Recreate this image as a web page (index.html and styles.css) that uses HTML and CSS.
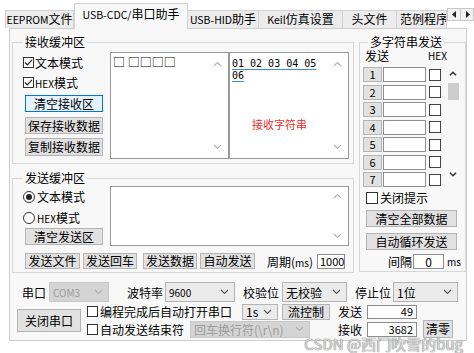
FILE: index.html
```html
<!doctype html>
<html lang="zh-cn">
  <head>
    <meta charset="utf-8">
    <title>USB-CDC/串口助手</title>
    <link rel="stylesheet" href="styles.css">
  </head>
  <body>
    <div class="tabs">
      <div class="tab t1"><span class="asc">EEPROM</span>文件</div>
      <div class="tab t2 active"><span class="asc">USB-CDC/</span>串口助手</div>
      <div class="tab t3"><span class="asc">USB-HID</span>助手</div>
      <div class="tab t4"><span class="asc">Keil</span>仿真设置</div>
      <div class="tab t5">头文件</div>
      <div class="tab t6">范例程序</div>
      <div class="tab-arrows">
        <span class="arrow"><svg width="5" height="7" viewBox="0 0 5 7"><path d="M4 0v7L0 3.5z" fill="#222"/></svg></span>
        <span class="arrow"><svg width="5" height="7" viewBox="0 0 5 7"><path d="M1 0v7l4-3.5z" fill="#222"/></svg></span>
      </div>
    </div>

    <div class="panel">
      <div class="main">
        <div class="left">
          <div class="group recv">
            <div class="group-title">接收缓冲区</div>
            <div class="recv-body">
              <div class="side">
                <div class="check-row"><span class="cb checked"><svg width="9" height="9" viewBox="0 0 9 9"><path d="M1 4.5l2.3 2.3L8 1.8" fill="none" stroke="#222" stroke-width="1.2"/></svg></span><span>文本模式</span></div>
                <div class="check-row"><span class="cb checked"><svg width="9" height="9" viewBox="0 0 9 9"><path d="M1 4.5l2.3 2.3L8 1.8" fill="none" stroke="#222" stroke-width="1.2"/></svg></span><span><span class="small">HEX</span>模式</span></div>
                <div class="btn side-btn b1 focus">清空接收区</div>
                <div class="btn side-btn b2">保存接收数据</div>
                <div class="btn side-btn b3">复制接收数据</div>
              </div>
              <div class="textbox recv-a">
                <div class="tb-text boxes">□ □□□□</div>
                <div class="tb-scroll">
                  <svg width="9" height="6" viewBox="0 0 9 6"><path d="M1 5l3.5-3.5L8 5" fill="none" stroke="#b4b4b4" stroke-width="1.1"/></svg>
                  <svg width="9" height="6" viewBox="0 0 9 6"><path d="M1 1l3.5 3.5L8 1" fill="none" stroke="#b4b4b4" stroke-width="1.1"/></svg>
                </div>
              </div>
              <div class="textbox recv-b">
                <div class="tb-text">
                  <div class="hex"><span class="ul">01 02 03 04 05</span></div>
                  <div class="hex"><span class="ul">06</span></div>
                  <div class="note">接收字符串</div>
                </div>
                <div class="tb-scroll">
                  <svg width="9" height="6" viewBox="0 0 9 6"><path d="M1 5l3.5-3.5L8 5" fill="none" stroke="#b4b4b4" stroke-width="1.1"/></svg>
                  <svg width="9" height="6" viewBox="0 0 9 6"><path d="M1 1l3.5 3.5L8 1" fill="none" stroke="#b4b4b4" stroke-width="1.1"/></svg>
                </div>
              </div>
            </div>
          </div>

          <div class="group send">
            <div class="group-title">发送缓冲区</div>
            <div class="send-body">
              <div class="side">
                <div class="radio-row"><span class="rb"><span class="dot"></span></span><span>文本模式</span></div>
                <div class="radio-row"><span class="rb"></span><span><span class="small">HEX</span>模式</span></div>
                <div class="btn side-btn">清空发送区</div>
              </div>
              <div class="textbox send-box">
                <div class="tb-text"></div>
                <div class="tb-scroll">
                  <svg width="9" height="6" viewBox="0 0 9 6"><path d="M1 5l3.5-3.5L8 5" fill="none" stroke="#b4b4b4" stroke-width="1.1"/></svg>
                  <svg width="9" height="6" viewBox="0 0 9 6"><path d="M1 1l3.5 3.5L8 1" fill="none" stroke="#b4b4b4" stroke-width="1.1"/></svg>
                </div>
              </div>
            </div>
            <div class="send-actions">
              <div class="btn a1">发送文件</div>
              <div class="btn a2">发送回车</div>
              <div class="btn a3">发送数据</div>
              <div class="btn a4">自动发送</div>
              <span class="period">周期(<span class="small">ms</span>)</span>
              <div class="field period-field">1000</div>
            </div>
          </div>
        </div>

        <div class="group multi">
          <div class="group-title">多字符串发送</div>
          <div class="multi-head"><span>发送</span><span class="hex-label">HEX</span></div>
          <div class="multi-list">
            <div class="rows">
              <div class="row"><div class="btn num">1</div><div class="field str"></div><span class="cb"></span></div>
              <div class="row"><div class="btn num">2</div><div class="field str"></div><span class="cb"></span></div>
              <div class="row"><div class="btn num">3</div><div class="field str"></div><span class="cb"></span></div>
              <div class="row"><div class="btn num">4</div><div class="field str"></div><span class="cb"></span></div>
              <div class="row"><div class="btn num">5</div><div class="field str"></div><span class="cb"></span></div>
              <div class="row"><div class="btn num">6</div><div class="field str"></div><span class="cb"></span></div>
              <div class="row"><div class="btn num">7</div><div class="field str"></div><span class="cb"></span></div>
            </div>
            <div class="vscroll">
              <div class="vs-arrow"><svg width="8" height="5" viewBox="0 0 8 5"><path d="M1 4.2l3-3 3 3" fill="none" stroke="#333" stroke-width="1.5"/></svg></div>
              <div class="vs-thumb"></div>
              <div class="vs-space"></div>
              <div class="vs-arrow"><svg width="8" height="5" viewBox="0 0 8 5"><path d="M1 0.8l3 3 3-3" fill="none" stroke="#333" stroke-width="1.5"/></svg></div>
            </div>
          </div>
          <div class="tip-row"><span class="cb"></span><span>关闭提示</span></div>
          <div class="btn wide w1">清空全部数据</div>
          <div class="btn wide w2">自动循环发送</div>
          <div class="gap-row"><span>间隔</span><div class="field gap-field">0</div><span class="small ms">ms</span></div>
        </div>
      </div>

      <div class="serial-row">
        <span class="lbl l1">串口</span>
        <div class="sel disabled s1"><span class="small">COM3</span><svg width="9" height="6" viewBox="0 0 9 6"><path d="M1 1l3.5 3.5L8 1" fill="none" stroke="#b0b0b0" stroke-width="1.1"/></svg></div>
        <span class="lbl l2">波特率</span>
        <div class="sel s2"><span class="small">9600</span><svg width="9" height="6" viewBox="0 0 9 6"><path d="M1 1l3.5 3.5L8 1" fill="none" stroke="#555" stroke-width="1.1"/></svg></div>
        <span class="lbl l3">校验位</span>
        <div class="sel s3"><span>无校验</span><svg width="9" height="6" viewBox="0 0 9 6"><path d="M1 1l3.5 3.5L8 1" fill="none" stroke="#555" stroke-width="1.1"/></svg></div>
        <span class="lbl l4">停止位</span>
        <div class="sel s4"><span>1位</span><svg width="9" height="6" viewBox="0 0 9 6"><path d="M1 1l3.5 3.5L8 1" fill="none" stroke="#555" stroke-width="1.1"/></svg></div>
      </div>

      <div class="serial-bottom">
        <div class="btn close-btn">关闭串口</div>
        <div class="serial-opts">
          <div class="opt-row r1">
            <span class="cb"></span>
            <span class="opt-label o1">编程完成后自动打开串口</span>
            <div class="sel s5"><span>1s</span><svg width="9" height="6" viewBox="0 0 9 6"><path d="M1 1l3.5 3.5L8 1" fill="none" stroke="#555" stroke-width="1.1"/></svg></div>
            <div class="btn flow">流控制</div>
            <span class="count-lbl">发送</span>
            <div class="field count">49</div>
          </div>
          <div class="opt-row r2">
            <span class="cb"></span>
            <span class="opt-label o2">自动发送结束符</span>
            <div class="sel disabled s6"><span>回车换行符(\r\n)</span><svg width="9" height="6" viewBox="0 0 9 6"><path d="M1 1l3.5 3.5L8 1" fill="none" stroke="#b0b0b0" stroke-width="1.1"/></svg></div>
            <span class="count-lbl c2">接收</span>
            <div class="field count">3682</div>
            <div class="btn clear">清零</div>
          </div>
        </div>
      </div>
    </div>

    <div class="watermark">CSDN @西门吹雪的bug</div>
  </body>
</html>
```

FILE: styles.css
```css
* { box-sizing: border-box; }
body { margin: 0; width: 474px; height: 353px; background: #fff; color: #000; font-family: "Noto Sans CJK SC", sans-serif; font-size: 12px; position: relative; overflow: hidden; }
.small { font-size: 10px; }

/* tab strip */
.tabs { display: flex; align-items: flex-end; height: 28px; padding-left: 5px; }
.tab { height: 18px; line-height: 16px; text-align: center; white-space: nowrap; background: #ececec; border: 1px solid #d2d2d2; border-bottom: none; }
.tab .asc { font-size: 10.5px; }
.tab + .tab { border-left: none; }
.tab.active { height: 26px; line-height: 20px; margin-bottom: -1px; background: #f8f8f8; position: relative; z-index: 1; border-left: 1px solid #d2d2d2; }
.t1 { width: 69px; }
.t2 { width: 114px; }
.t3 { width: 71px; }
.t4 { width: 84px; }
.t5 { width: 54px; }
.t6 { width: 50px; overflow: hidden; text-align: left; padding-left: 3px; }
.tab-arrows { display: flex; align-self: flex-start; margin-top: 8px; }
.arrow { width: 14px; height: 13px; display: flex; align-items: center; justify-content: center; background: #f2f2f2; border: 1px solid #c8c8c8; }
.arrow + .arrow { border-left: none; width: 13px; }

/* page */
.panel { margin-left: 9px; width: 458px; height: 313px; border: 1px solid #cfcfcf; background: #f8f8f8; padding: 13px 0 0 2px; }
.main { display: flex; gap: 5px; }
.left { width: 342px; display: flex; flex-direction: column; gap: 14px; }
.group { border: 1px solid #d8d8d8; }
.group-title { width: max-content; margin: -8px 0 0 10px; padding: 0 2px; line-height: 14px; height: 14px; background: #f8f8f8; }
.recv { height: 122px; }
.send { height: 95px; }
.multi { width: 107px; height: 230px; }
.multi .group-title { margin-left: 8px; }

/* controls */
.btn { display: flex; align-items: center; justify-content: center; white-space: nowrap; background: #e1e1e1; border: 1px solid #b4b4b4; line-height: 1; }
.btn.focus { background: #e5f1fb; border-color: #0078d7; }
.cb { width: 11px; height: 11px; flex: none; display: flex; align-items: center; justify-content: center; background: #fff; border: 1px solid #333; }
.rb { width: 12px; height: 12px; flex: none; display: flex; align-items: center; justify-content: center; background: #fff; border: 1px solid #333; border-radius: 50%; margin-right: 1px; }
.rb .dot { width: 6px; height: 6px; border-radius: 50%; background: #222; }
.field { background: #fff; border: 1px solid #8e8e8e; white-space: nowrap; overflow: hidden; line-height: 1; display: flex; align-items: center; }
.textbox { display: flex; background: #fff; border: 1px solid #999; }
.tb-text { flex: 1; padding: 2px 2px; line-height: 12px; }
.tb-scroll { width: 22px; display: flex; flex-direction: column; justify-content: space-between; align-items: center; padding: 8px 0; }
.sel { display: flex; align-items: center; justify-content: space-between; padding: 0 5px 0 3px; background: #ebebeb; border: 1px solid #b4b4b4; white-space: nowrap; overflow: hidden; }
.sel.disabled { background: #d4d4d4; border-color: #c8c8c8; color: #9c9c9c; }

/* receive */
.recv-body { display: flex; margin-top: 3px; padding-left: 10px; }
.side { width: 87px; }
.check-row { height: 20px; display: flex; align-items: center; gap: 1px; }
.side-btn { margin-left: 2px; width: 78px; height: 17px; margin-top: 3px; }
.b2 { margin-top: 5px; }
.b3 { margin-top: 4px; height: 18px; }
.recv-a { width: 119px; height: 107px; }
.recv-b { width: 120px; height: 107px; }
.boxes { padding: 3px 0 0 2px; }
.hex { font-family: "DejaVu Sans Mono", monospace; font-size: 10px; }
.hex:first-child { margin-top: 3px; }
.ul { text-decoration: underline; text-decoration-color: #3b8ae0; text-underline-offset: 2px; }
.note { margin: 36px 0 0 20px; font-size: 11px; color: #e8302c; }

/* send */
.send-body { display: flex; margin-top: 1px; padding-left: 10px; }
.radio-row { height: 21px; display: flex; align-items: center; gap: 1px; }
.send-body .side-btn { margin-top: 0; }
.send-box { width: 239px; height: 60px; }
.send-box .tb-scroll { padding: 6px 0; }
.send-actions { display: flex; align-items: center; height: 16px; margin-top: 7px; padding-left: 12px; }
.send-actions .btn { height: 16px; width: 54px; }
.a1 { width: 55px !important; }
.a2 { margin-left: 3px; }
.a3 { margin-left: 6px; }
.a4 { margin-left: 3px; width: 55px !important; }
.period { margin-left: 12px; width: 50px; white-space: nowrap; }
.period-field { width: 28px; height: 15px; padding-left: 2px; font-size: 11px; }

/* multi string */
.multi-head { display: flex; height: 13px; line-height: 13px; padding-left: 5px; }
.hex-label { margin-left: 39px; font-size: 10px; }
.multi-list { display: flex; margin-top: 5px; padding-left: 3px; }
.rows { width: 78px; display: flex; flex-direction: column; gap: 2.5px; }
.row { display: flex; align-items: center; height: 15px; }
.num { width: 19px; height: 15px; font-size: 11px; }
.str { width: 43px; height: 15px; margin-left: 1px; }
.row .cb { width: 12px; height: 12px; margin-left: 3px; border-color: #444; }
.vscroll { width: 12px; height: 114px; margin-left: 6px; display: flex; flex-direction: column; align-items: center; }
.vs-arrow { height: 13px; display: flex; align-items: center; }
.vs-thumb { width: 11px; height: 17px; margin-top: 3px; background: #cdcdcd; }
.vs-space { flex: 1; }
.tip-row { display: flex; align-items: center; gap: 2px; height: 17px; margin-top: 2px; padding-left: 6px; }
.tip-row .cb { width: 12px; height: 12px; }
.wide { width: 91px; height: 17px; margin: 4px 0 0 6px; }
.w2 { margin-top: 6px; }
.gap-row { display: flex; align-items: center; height: 15px; margin-top: 4px; padding-left: 28px; }
.gap-field { width: 31px; height: 15px; margin-left: 1px; justify-content: center; }
.ms { margin-left: 3px; }

/* serial port */
.serial-row { display: flex; align-items: center; height: 20px; margin-top: 9px; padding-left: 10px; }
.sel.s1, .sel.s2, .sel.s3, .sel.s4 { height: 20px; }
.l1 { width: 24px; }
.s1 { width: 60px; margin-left: 3px; }
.l2 { width: 36px; margin-left: 18px; }
.s2 { width: 70px; margin-left: 2px; }
.l3 { width: 36px; margin-left: 8px; }
.s3 { width: 65px; margin-left: 3px; }
.l4 { width: 36px; margin-left: 8px; }
.s4 { width: 65px; margin-left: 2px; }
.serial-bottom { display: flex; height: 35px; margin-top: 1px; padding-left: 5px; }
.close-btn { width: 64px; height: 23px; align-self: center; }
.serial-opts { margin-left: 6px; display: flex; flex-direction: column; }
.opt-row { display: flex; align-items: center; }
.r1 { height: 17px; }
.r2 { height: 18px; }
.opt-label { margin-left: 2px; white-space: nowrap; }
.o1 { width: 140px; }
.o2 { width: 88px; }
.s5 { width: 36px; height: 16px; margin-left: 2px; }
.flow { width: 48px; height: 16px; margin-left: 4px; }
.count-lbl { width: 29px; margin-left: 8px; }
.c2 { margin-left: 28px; }
.count { width: 50px; height: 14px; justify-content: flex-end; padding-right: 3px; font-size: 11px; }
.r2 .count { height: 15px; }
.s6 { width: 120px; height: 17px; margin-left: 2px; }
.clear { width: 30px; height: 18px; margin-left: 6px; }

.watermark { position: absolute; right: 11px; bottom: 1px; font-size: 15px; line-height: 17px; color: rgba(255, 255, 255, 0.7); text-shadow: 0 0 1px #777, 0 0 1px #777; white-space: nowrap; }
```
